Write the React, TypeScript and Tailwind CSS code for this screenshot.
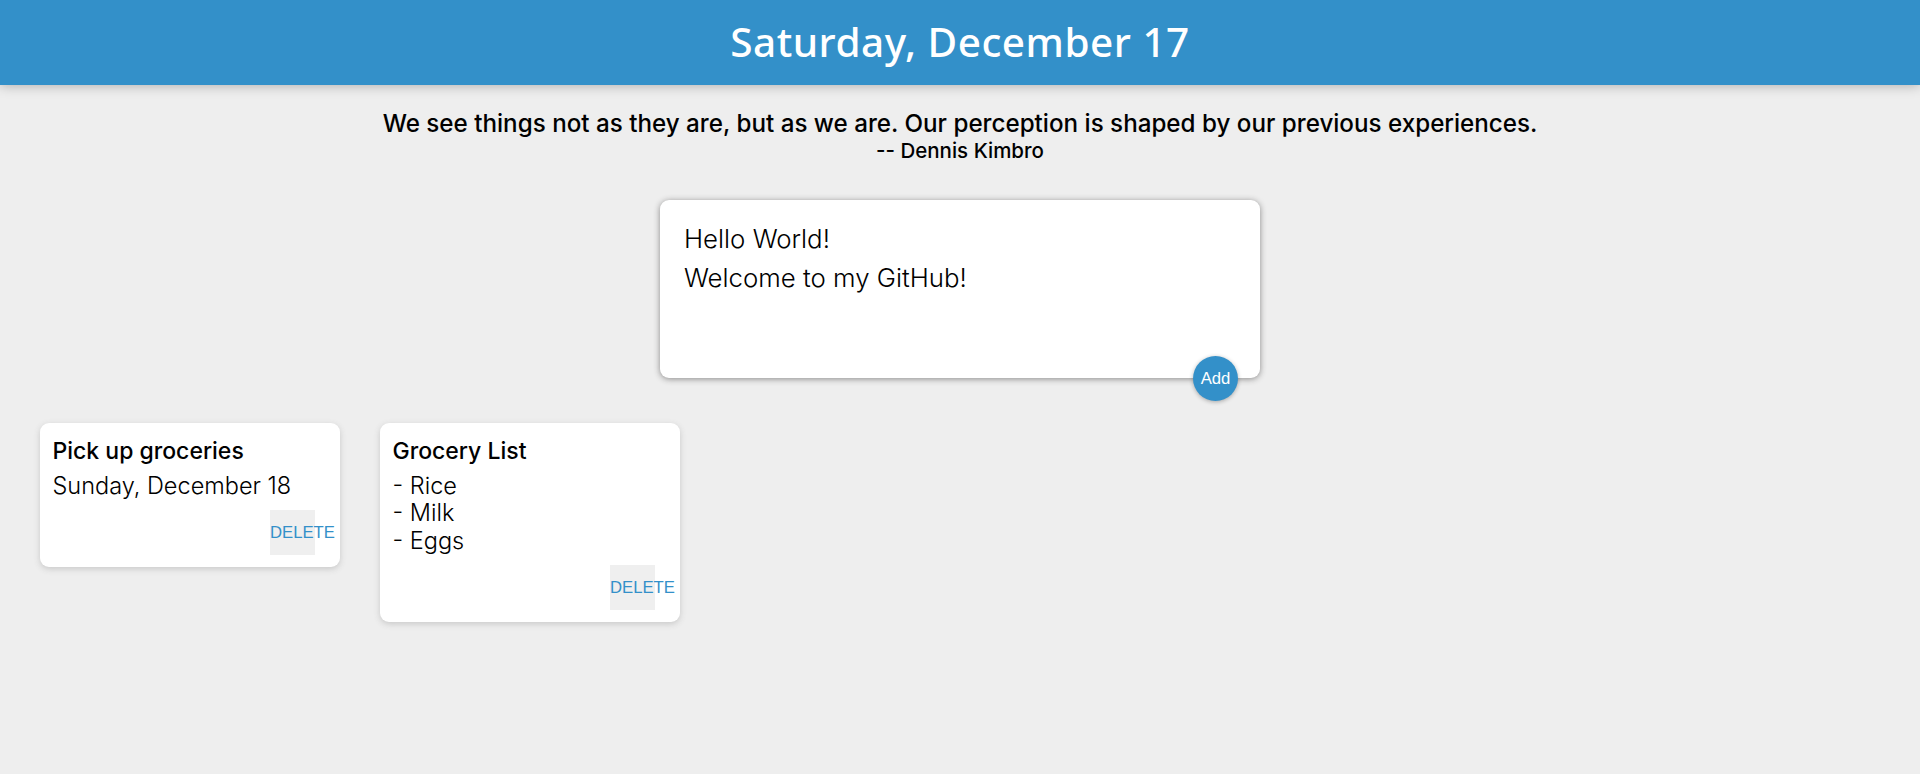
import React from "react";

const notes = [
  { title: "Pick up groceries", body: ["Sunday, December 18"] },
  { title: "Grocery List", body: ["- Rice", "- Milk", "- Eggs"] },
];

function Note({ title, body }: { title: string; body: string[] }) {
  return (
    <div className="w-[300px] rounded-[9px] bg-white px-[12.5px] pt-[14.5px] pb-[12px] shadow-[0_2px_6px_#c8c8c8]">
      <h1 className="text-[23px] leading-[27px] font-medium text-black">{title}</h1>
      <div className="mt-[7px] text-[23.5px] leading-[27.5px] font-light text-black">
        {body.map((line) => (
          <p key={line}>{line}</p>
        ))}
      </div>
      <div className="mt-[11px] flex justify-end pr-[12.5px]">
        <button className="flex h-[45px] w-[45px] items-center justify-start overflow-visible whitespace-nowrap bg-[#efefef] font-['Liberation_Sans',Arial,sans-serif] text-[16.7px] text-[#3390c9]">
          DELETE
        </button>
      </div>
    </div>
  );
}

export default function App() {
  return (
    <div className="min-h-screen bg-[#eeeeee] font-['Inter',sans-serif] text-black">
      <header className="relative z-10 flex h-[85px] items-center justify-center bg-[#3390c9] shadow-[0_0_12px_0_rgba(0,0,0,0.3)]">
        <h1 className="font-['Noto_Sans',sans-serif] text-[40.5px] font-medium tracking-[0.5px] text-white">
          Saturday, December 17
        </h1>
      </header>

      <div className="mt-[24px] text-center">
        <p className="text-[24.2px] leading-[30px] font-medium">
          We see things not as they are, but as we are. Our perception is shaped by our previous experiences.
        </p>
        <p className="text-[20.5px] leading-[23px] font-medium">-- Dennis Kimbro</p>
      </div>

      <form className="relative mx-auto mt-[38px] h-[178px] w-[600px] rounded-[9px] bg-white px-[19px] pt-[22.5px] shadow-[0_1px_6px_rgb(138,137,137)]">
        <div className="px-[5px] text-[25.8px] leading-[32px] font-light">Hello World!</div>
        <div className="mt-[7px] px-[5px] text-[25.8px] leading-[32px] font-light">Welcome to my GitHub!</div>
        <button
          type="button"
          className="absolute right-[22px] bottom-[-23px] flex h-[45px] w-[45px] items-center justify-center rounded-full bg-[#3390c9] font-['Liberation_Sans',Arial,sans-serif] text-[16.7px] text-white shadow-[0_1px_4px_rgba(0,0,0,0.3)]"
        >
          Add
        </button>
      </form>

      <div className="mt-[45px] flex items-start gap-[40px] px-[40px]">
        {notes.map((n) => (
          <Note key={n.title} title={n.title} body={n.body} />
        ))}
      </div>
    </div>
  );
}
